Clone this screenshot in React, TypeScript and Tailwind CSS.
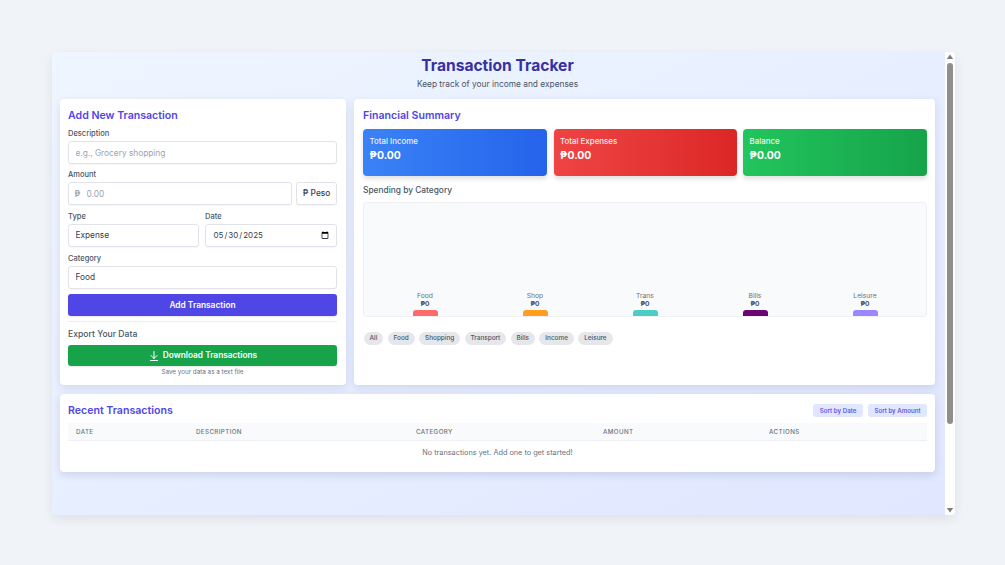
import React from 'react'
import { ArrowDownToLine } from 'lucide-react'

const inputClass =
  'block w-full h-[23px] rounded-[3px] border border-[#e2e3ea] bg-white px-[6.5px] text-[8.3px] text-[#374151] placeholder:text-[#9ca3af] shadow-[0_1px_1px_rgba(0,0,0,0.04)] outline-none'

const labelClass = 'block h-[11.5px] mb-[1.5px] text-[7.5px] leading-[12px] font-medium text-[#4b5563]'

const stats = [
  { name: 'Total Income', className: 'from-[#3b82f6] to-[#2563eb]', width: 'w-[184px]' },
  { name: 'Total Expenses', className: 'from-[#ef4444] to-[#dc2626]', width: 'w-[183px]' },
  { name: 'Balance', className: 'from-[#22c55e] to-[#16a34a]', width: 'w-[184px]' },
]

const bars = [
  { name: 'Food', color: 'bg-[#ff6b6b]' },
  { name: 'Shop', color: 'bg-[#ff9f1c]' },
  { name: 'Trans', color: 'bg-[#4ecdc4]' },
  { name: 'Bills', color: 'bg-[#6a0572]' },
  { name: 'Leisure', color: 'bg-[#9b87ff]' },
]

const chips = ['All', 'Food', 'Shopping', 'Transport', 'Bills', 'Income', 'Leisure']
const columns = ['Date', 'Description', 'Category', 'Amount', 'Actions']

const Scrollbar = () => (
  <div className="w-[10px] shrink-0 bg-white flex flex-col items-center">
    <svg width="8" height="8" viewBox="0 0 8 8" className="mt-[1px] shrink-0">
      <path d="M4 1.5 7.2 6H.8z" fill="#7f7f7f" />
    </svg>
    <div className="mt-[2px] h-[361px] w-[6px] rounded-[3px] bg-[#8f8f8f]" />
    <div className="flex-1" />
    <svg width="8" height="8" viewBox="0 0 8 8" className="mb-[1px] shrink-0">
      <path d="M4 6.5 7.2 2H.8z" fill="#7f7f7f" />
    </svg>
  </div>
)

const AddForm = () => (
  <section className="w-[286px] h-[286px] shrink-0 rounded-[4px] bg-white shadow-[0_3px_8px_rgba(30,41,90,0.12)] pl-[8px] pr-[9px] pt-[9px]">
    <h2 className="h-[15px] text-[10.6px] leading-[15px] font-semibold text-[#4f46e5]">Add New Transaction</h2>
    <div className="mt-[5px]">
      <label className={labelClass}>Description</label>
      <input className={inputClass} placeholder="e.g., Grocery shopping" />
    </div>
    <div className="mt-[5px]">
      <label className={labelClass}>Amount</label>
      <div className="flex gap-[4px]">
        <div className="relative flex-1">
          <span className="absolute left-[6.5px] top-[5.5px] text-[8.3px] font-semibold text-[#9ca3af]">₱</span>
          <input className={`${inputClass} pl-[17.5px]`} placeholder="0.00" />
        </div>
        <button className="w-[41px] h-[23px] rounded-[3px] border border-[#e2e3ea] bg-white text-[8.3px] font-medium text-[#374151] shadow-[0_1px_1px_rgba(0,0,0,0.04)]">
          ₱ Peso
        </button>
      </div>
    </div>
    <div className="mt-[5.5px] flex gap-[6px]">
      <div className="w-[131px]">
        <label className={labelClass}>Type</label>
        <select className={`${inputClass} appearance-none`} defaultValue="Expense">
          <option>Expense</option>
          <option>Income</option>
        </select>
      </div>
      <div className="flex-1">
        <label className={labelClass}>Date</label>
        <input type="date" className={`${inputClass} text-[8px] pr-[5px]`} defaultValue="2025-05-30" />
      </div>
    </div>
    <div className="mt-[6px]">
      <label className={labelClass}>Category</label>
      <select className={`${inputClass} appearance-none`} defaultValue="Food">
        <option>Food</option>
        <option>Shopping</option>
      </select>
    </div>
    <button className="block mt-[5.5px] w-full h-[22px] rounded-[3px] bg-[#4f46e5] text-[8.35px] font-semibold text-white shadow-[0_1px_2px_rgba(0,0,0,0.1)]">
      Add Transaction
    </button>
    <div className="mt-[5px] border-t border-[#eceef2] pt-[6px]">
      <h3 className="h-[12px] text-[8.6px] leading-[12px] font-medium text-[#4b5563]">Export Your Data</h3>
      <button className="mt-[5px] w-full h-[21px] rounded-[3px] bg-[#16a34a] text-[8.3px] font-semibold text-white flex items-center justify-center gap-[3px] shadow-[0_1px_2px_rgba(0,0,0,0.1)]">
        <ArrowDownToLine size={12} strokeWidth={2} />
        Download Transactions
      </button>
      <p className="mt-[2px] text-center text-[6.3px] leading-[9px] text-[#6b7280]">Save your data as a text file</p>
    </div>
  </section>
)

const Summary = () => (
  <section className="flex-1 h-[286px] rounded-[4px] bg-white shadow-[0_3px_8px_rgba(30,41,90,0.12)] pl-[9px] pr-[8px] pt-[9px]">
    <h2 className="h-[15px] text-[10.6px] leading-[15px] font-semibold text-[#4f46e5]">Financial Summary</h2>
    <div className="mt-[6px] flex justify-between">
      {stats.map(stat => (
        <div
          key={stat.name}
          className={`${stat.width} h-[47px] rounded-[4px] bg-gradient-to-r ${stat.className} px-[6.5px] pt-[7px] text-white shadow-[0_3px_5px_rgba(0,0,0,0.12)]`}
        >
          <div className="text-[7.9px] leading-[11px] font-medium opacity-90">{stat.name}</div>
          <div className="mt-[1px] text-[10.4px] leading-[16px] font-bold">₱0.00</div>
        </div>
      ))}
    </div>
    <h3 className="mt-[8px] h-[12px] text-[8.35px] leading-[12px] font-medium text-[#4b5563]">Spending by Category</h3>
    <div className="mt-[6px] h-[115px] rounded-[3px] border border-[#eef0f4] bg-[#f9fafb] flex items-end justify-around px-[6px]">
      {bars.map(bar => (
        <div key={bar.name} className="w-[25px] flex flex-col items-center">
          <span className="text-[6.75px] leading-[9px] text-[#6b7280]">{bar.name}</span>
          <span className="mt-[-0.5px] text-[6.75px] leading-[9px] font-semibold text-[#374151]">₱0</span>
          <div className={`mt-[2px] w-[25px] h-[6px] rounded-t-[3px] ${bar.color}`} />
        </div>
      ))}
    </div>
    <div className="mt-[15px] flex gap-[4.3px] pl-[0.5px]">
      {chips.map(chip => (
        <span
          key={chip}
          className="h-[12.5px] rounded-full bg-[#e5e7eb] px-[6px] text-[6.4px] leading-[12.5px] font-medium text-[#4b5563]"
        >
          {chip}
        </span>
      ))}
    </div>
  </section>
)

const Recent = () => (
  <section className="mt-[9px] h-[78px] rounded-[4px] bg-white shadow-[0_3px_8px_rgba(30,41,90,0.14)] px-[8px] pt-[9px]">
    <div className="flex items-center justify-between h-[15px]">
      <h2 className="text-[10.6px] leading-[15px] font-semibold text-[#4f46e5]">Recent Transactions</h2>
      <div className="flex gap-[5px]">
        <button className="h-[13px] rounded-[3px] bg-[#e0e7ff] px-[6.5px] text-[6.2px] font-medium text-[#4f46e5]">Sort by Date</button>
        <button className="h-[13px] rounded-[3px] bg-[#e0e7ff] px-[6.5px] text-[6.2px] font-medium text-[#4f46e5]">Sort by Amount</button>
      </div>
    </div>
    <div className="mt-[5px] h-[18px] grid grid-cols-[120px_220px_187px_166px_1fr] items-center bg-[#f9fafb] border-b border-[#eef0f4] pl-[8px] pt-[1px]">
      {columns.map(col => (
        <span key={col} className="text-[6.2px] font-medium uppercase tracking-[0.4px] text-[#6b7280]">{col}</span>
      ))}
    </div>
    <p className="mt-[6px] text-center text-[7.3px] leading-[11px] text-[#6b7280]">No transactions yet. Add one to get started!</p>
  </section>
)

export default function App() {
  return (
    <div className="w-[1005px] h-[565px] overflow-hidden bg-[#f0f3f7] pt-[52px] pl-[52px] font-['Inter',sans-serif]">
      <div className="w-[903px] h-[463px] flex rounded-[4px] overflow-hidden shadow-[0_4px_12px_rgba(0,0,0,0.08)]">
        <main className="flex-1 bg-gradient-to-br from-[#eff6ff] to-[#e0e7ff] pl-[8px] pr-[10px] pt-[4px]">
          <header className="h-[43px] text-center">
            <h1 className="text-[15.6px] leading-[20px] font-bold text-[#3730a3]">Transaction Tracker</h1>
            <p className="mt-[2px] text-[8.35px] leading-[13px] text-[#4b5563]">Keep track of your income and expenses</p>
          </header>
          <div className="flex gap-[8px]">
            <AddForm />
            <Summary />
          </div>
          <Recent />
        </main>
        <Scrollbar />
      </div>
    </div>
  )
}
